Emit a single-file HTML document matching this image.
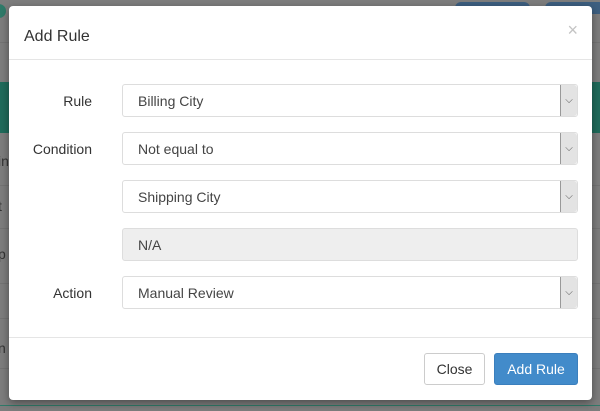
<!DOCTYPE html>
<html><head><style>
body{margin:0;width:600px;height:411px;background:#7d7d7d;position:relative;overflow:hidden;font-family:"Liberation Sans",sans-serif}
.bg{position:absolute;left:0;width:600px}
.modal{position:absolute;left:9px;top:6px;width:583px;height:394px;background:#fff;border-radius:4px;box-shadow:0 3px 9px rgba(0,0,0,.4)}
.title{position:absolute;left:15px;top:22px;font-size:16px;color:#333}
.x{position:absolute;right:14px;top:14px;font-size:18px;color:#c4c4c4}
.hr{position:absolute;left:0;width:583px;height:1px;background:#e5e5e5}
.lbl{position:absolute;right:500px;font-size:14px;color:#333;text-align:right}
.inp{position:absolute;left:113px;width:456px;height:33px;border:1px solid #ddd;border-radius:3px;box-sizing:border-box;font-size:14px;color:#444;padding:8px 15px}
.arr{position:absolute;right:0;top:0;width:16px;height:31px;background:#e3e3e3;border-left:1px solid #999;border-radius:0 3px 3px 0;font-size:10px;color:#555;text-align:center;line-height:31px}
.btn{position:absolute;top:347px;height:32px;border-radius:3px;box-sizing:border-box;font-size:14px;text-align:center;line-height:30px}
</style></head><body>
<div style="position:absolute;left:-8px;top:4px;width:14px;height:14px;border-radius:7px;background:#2f7a69"></div>
<div style="position:absolute;left:455px;top:2px;width:75px;height:12px;border-radius:6px;background:#3d5f80"></div>
<div style="position:absolute;left:545px;top:2px;width:60px;height:12px;border-radius:6px;background:#3d5f80"></div>
<div class="bg" style="top:82px;height:51px;background:#1f6b5b"></div>
<div class="bg" style="top:42px;height:1px;background:#737373"></div>
<div class="bg" style="top:185px;height:1px;background:#737373"></div>
<div class="bg" style="top:228px;height:1px;background:#737373"></div>
<div class="bg" style="top:283px;height:1px;background:#737373"></div>
<div class="bg" style="top:318px;height:1px;background:#737373"></div>
<div class="bg" style="top:368px;height:1px;background:#737373"></div>
<div style="position:absolute;left:-2px;top:153px;font-size:14px;color:#333">in</div>
<div style="position:absolute;left:-2px;top:198px;font-size:14px;color:#333">t</div>
<div style="position:absolute;left:-2px;top:246px;font-size:14px;color:#333">p</div>
<div style="position:absolute;left:-2px;top:340px;font-size:14px;color:#333">n</div>
<div class="bg" style="top:405px;height:1px;background:#2f7a69"></div>
<div class="modal">
<div class="title">Add Rule</div>
<div class="x">×</div>
<div class="hr" style="top:53px"></div>
<div class="lbl" style="top:87px">Rule</div>
<div class="inp" style="top:78px">Billing City<div class="arr">⌵</div></div>
<div class="lbl" style="top:135px">Condition</div>
<div class="inp" style="top:126px">Not equal to<div class="arr">⌵</div></div>
<div class="inp" style="top:174px">Shipping City<div class="arr">⌵</div></div>
<div class="inp" style="top:222px;background:#eee">N/A</div>
<div class="lbl" style="top:279px">Action</div>
<div class="inp" style="top:270px">Manual Review<div class="arr">⌵</div></div>
<div class="hr" style="top:331px"></div>
<div class="btn" style="left:415px;width:61px;border:1px solid #ccc;color:#333">Close</div>
<div class="btn" style="left:485px;width:84px;background:#428bca;border:1px solid #3b7fbd;color:#fff">Add Rule</div>
</div>
</body></html>
